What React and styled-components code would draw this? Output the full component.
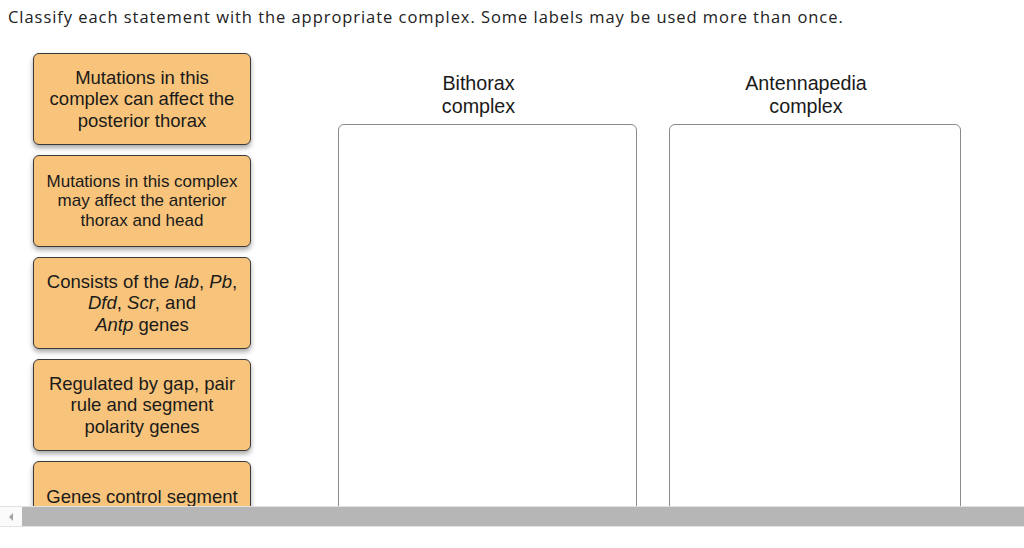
import React from "react";
import styled, { createGlobalStyle } from "styled-components";

const GlobalStyle = createGlobalStyle`
  html, body {
    margin: 0;
    padding: 0;
    background: #fff;
  }
`;

const Page = styled.div`
  width: 1024px;
  height: 548px;
  overflow: hidden;
  background: #fff;
`;

const Prompt = styled.p`
  margin: 0;
  padding: 5px 0 0 8px;
  height: 32px;
  box-sizing: border-box;
  font-family: "Open Sans", "Liberation Sans", sans-serif;
  font-size: 16.5px;
  letter-spacing: 0.95px;
  color: #222;
`;

const Viewport = styled.div`
  height: 474px;
  overflow: hidden;
`;

const Board = styled.div`
  display: flex;
  align-items: flex-start;
`;

const Tray = styled.div`
  display: flex;
  flex-direction: column;
  gap: 10px;
  padding: 21px 0 0 33px;
  width: 218px;
`;

const Label = styled.div`
  box-sizing: border-box;
  height: 92px;
  display: flex;
  align-items: center;
  justify-content: center;
  text-align: center;
  padding: 0 6px;
  background: #f8c47b;
  border: 1px solid #3a3a3a;
  border-radius: 6px;
  box-shadow: 0 3px 5px rgba(0, 0, 0, 0.35);
  font-family: "Liberation Sans", Arial, sans-serif;
  font-size: ${(p) => (p.$small ? "17px" : "18.5px")};
  line-height: ${(p) => (p.$small ? "19.5px" : "21.5px")};
  color: #1a1a1a;

  i {
    font-style: italic;
  }
`;

const Bins = styled.div`
  display: flex;
  gap: 32px;
  margin-left: 87px;
  padding-top: 40px;
`;

const Bin = styled.div`
  display: flex;
  flex-direction: column;
  align-items: center;
  width: ${(p) => p.$w}px;
`;

const BinTitle = styled.div`
  height: 52px;
  padding-right: 18px;
  text-align: center;
  font-family: "Liberation Sans", Arial, sans-serif;
  font-size: 19.7px;
  line-height: 23px;
  color: #1a1a1a;
`;

const DropZone = styled.div`
  box-sizing: border-box;
  width: 100%;
  height: 420px;
  border: 1px solid #8a8a8a;
  border-radius: 6px;
  background: #fff;
`;

const ScrollBar = styled.div`
  display: flex;
  height: 19px;
  border-top: 1px solid #e2e2e2;
  border-bottom: 1px solid #e2e2e2;
`;

const ArrowButton = styled.div`
  width: 22px;
  display: flex;
  align-items: center;
  justify-content: center;
  background: #fbfbfb;
`;

const Thumb = styled.div`
  flex: 1;
  background: #b6b6b6;
`;

const labels = [
  { text: <>Mutations in this complex can affect the posterior thorax</> },
  {
    text: <>Mutations in this complex may affect the anterior thorax and head</>,
    small: true,
  },
  {
    text: (
      <>
        Consists of the <i>lab</i>, <i>Pb</i>,<br />
        <i>Dfd</i>, <i>Scr</i>, and<br />
        <i>Antp</i> genes
      </>
    ),
  },
  { text: <>Regulated by gap, pair rule and segment polarity genes</> },
  { text: <>Genes control segment identity</> },
];

export default function App() {
  return (
    <Page>
      <GlobalStyle />
      <Prompt>
        Classify each statement with the appropriate complex. Some labels may
        be used more than once.
      </Prompt>
      <Viewport>
        <Board>
          <Tray>
            {labels.map((l, i) => (
              <Label key={i} $small={l.small}>
                <span>{l.text}</span>
              </Label>
            ))}
          </Tray>
          <Bins>
            <Bin $w={299}>
              <BinTitle>
                Bithorax
                <br />
                complex
              </BinTitle>
              <DropZone />
            </Bin>
            <Bin $w={292}>
              <BinTitle>
                Antennapedia
                <br />
                complex
              </BinTitle>
              <DropZone />
            </Bin>
          </Bins>
        </Board>
      </Viewport>
      <ScrollBar>
        <ArrowButton>
          <svg width="5" height="8" viewBox="0 0 5 8">
            <path d="M4 0 L0 4 L4 8 Z" fill="#a3a3a3" />
          </svg>
        </ArrowButton>
        <Thumb />
      </ScrollBar>
    </Page>
  );
}
